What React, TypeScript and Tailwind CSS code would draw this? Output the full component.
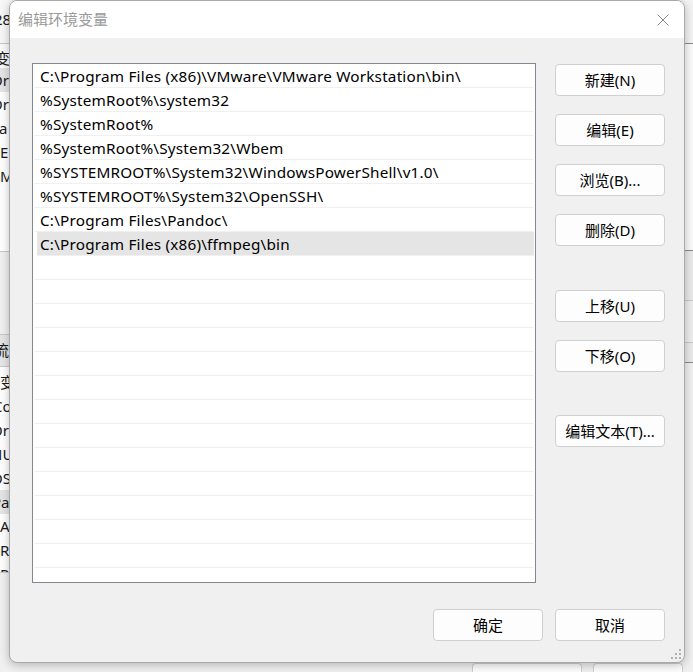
import * as React from "react"

const FONT = "font-['Noto_Sans','Noto_Sans_CJK_SC',sans-serif]"

const paths = [
  "C:\\Program Files (x86)\\VMware\\VMware Workstation\\bin\\",
  "%SystemRoot%\\system32",
  "%SystemRoot%",
  "%SystemRoot%\\System32\\Wbem",
  "%SYSTEMROOT%\\System32\\WindowsPowerShell\\v1.0\\",
  "%SYSTEMROOT%\\System32\\OpenSSH\\",
  "C:\\Program Files\\Pandoc\\",
  "C:\\Program Files (x86)\\ffmpeg\\bin",
]

const backRows = [
  { t: "变", shift: "ml-0" },
  { t: "Co", shift: "ml-[-7px]" },
  { t: "Or", shift: "ml-[-9px]" },
  { t: "NU", shift: "ml-[-9px]" },
  { t: "OS", shift: "ml-[-9px]" },
  { t: "Pa", shift: "ml-[-8px]" },
  { t: "A", shift: "ml-0" },
  { t: "R", shift: "ml-0" },
]

const Button = ({ label, className }: { label: string; className?: string }) => (
  <button
    className={`h-[32px] w-[110px] rounded-[4px] border border-[#d0d0d0] bg-[#fdfdfd] text-[15px] text-black ${className ?? ""}`}
  >
    {label}
  </button>
)

const BackStrip = () => (
  <div className="flex w-[12px] flex-col overflow-hidden whitespace-nowrap text-[15px] leading-[24px] text-[#1a1a1a]">
    <div className="h-[44px] bg-[#f7f7f7] pt-[7px] border-b border-[#c8c8c8]">
      <span className="ml-[-6px]">28</span>
    </div>
    <div className="h-[24px] bg-[#fafafa] pt-[2px]"><span className="ml-[-5px]">变量</span></div>
    <div className="h-[24px] bg-[#e5e5e5]"><span className="ml-[-9px]">Or</span></div>
    <div className="h-[24px] bg-white"><span className="ml-[-9px]">Or</span></div>
    <div className="h-[24px] bg-white"><span className="ml-[-1px]">a</span></div>
    <div className="h-[24px] bg-white"><span>E</span></div>
    <div className="h-[24px] bg-white"><span>M</span></div>
    <div className="h-[64px] bg-white border-b border-[#c8c8c8]" />
    <div className="h-[83px] bg-[#f0f0f0] border-b border-[#c8c8c8]" />
    <div className="h-[32px] bg-[#e6e6e6] pt-[3px] border-b border-[#c8c8c8]"><span className="ml-[-6px]">流</span></div>
    <div className="bg-white pt-[3px]">
      {backRows.map((r, i) => (
        <div key={i} className={`h-[24px] ${i === 5 ? "bg-[#e5e5e5]" : ""}`}>
          <span className={r.shift}>{r.t}</span>
        </div>
      ))}
      <div className="h-[10px] overflow-hidden leading-[24px]"><span>P</span></div>
    </div>
    <div className="flex-1 bg-[#f0f0f0] border-t border-[#c8c8c8]" />
  </div>
)

export default function App() {
  return (
    <div className={`relative h-[672px] w-[693px] overflow-hidden bg-[#f0f0f0] ${FONT}`}>
      {/* window behind the dialog */}
      <div className="flex h-full">
        <BackStrip />
        <div className="flex flex-1 flex-col justify-end">
          <div className="flex h-[9px] gap-[11px] pl-[460px]">
            <div className="w-[110px] rounded-t-[4px] border border-b-0 border-[#d0d0d0] bg-[#fdfdfd]" />
            <div className="flex-1 rounded-t-[4px] border border-b-0 border-[#d0d0d0] bg-[#fdfdfd]" />
          </div>
        </div>
        <div className="flex w-[10px] flex-col">
          <div className="h-[44px] bg-[#f3f3f3] border-b border-[#8a8a8a]" />
          <div className="h-[207px] bg-[#fafafa] border-b border-[#8a8a8a]" />
          <div className="h-[50px] bg-[#e9e9e9] border-b border-[#c8c8c8]" />
          <div className="h-[42px] bg-[#ededed] border-b border-[#c8c8c8]" />
          <div className="h-[20px] bg-[#e9e9e9] border-b border-[#8a8a8a]" />
          <div className="flex-1 bg-[#f0f0f0]" />
        </div>
      </div>

      {/* dialog */}
      <div className="absolute left-[9px] top-0 flex h-[663px] w-[676px] flex-col overflow-hidden rounded-[8px] border border-[#a9a9a9] bg-[#f0f0f0] shadow-[0_2px_10px_rgba(0,0,0,0.25)]">
        <div className="flex h-[37px] shrink-0 items-center justify-between bg-white pl-[8px] pr-[15px]">
          <span className="text-[15px] text-[#9a9a9a]">编辑环境变量</span>
          <svg width="12" height="12" viewBox="0 0 12 12" className="mt-[1px]">
            <path d="M0.5 0.5 L11.5 11.5 M11.5 0.5 L0.5 11.5" stroke="#8a8a8a" strokeWidth="1" fill="none" />
          </svg>
        </div>

        <div className="flex flex-1 flex-col pl-[22px] pr-[19px] pt-[25px]">
          <div className="flex">
            <div className="h-[520px] w-[504px] overflow-hidden border border-[#828790] bg-white">
              {Array.from({ length: 22 }).map((_, i) => (
                <div
                  key={i}
                  className={`h-[24px] border-b border-[#f0f0f0] pt-[1px] text-[15.3px] tracking-[0.2px] leading-[23px] text-black whitespace-nowrap ${
                    i === 7 ? "ml-[4px] mr-[1px] bg-[#e5e5e5] pl-[3px]" : "mx-[1px] pl-[6px]"
                  }`}
                >
                  {paths[i] ?? ""}
                </div>
              ))}
            </div>
            <div className="ml-[19px] flex flex-col pt-[1px]">
              <Button label="新建(N)" />
              <Button label="编辑(E)" className="mt-[18px]" />
              <Button label="浏览(B)..." className="mt-[18px]" />
              <Button label="删除(D)" className="mt-[18px]" />
              <Button label="上移(U)" className="mt-[44px]" />
              <Button label="下移(O)" className="mt-[18px]" />
              <Button label="编辑文本(T)..." className="mt-[43px]" />
            </div>
          </div>
          <div className="mt-[26px] flex justify-end gap-[12px]">
            <Button label="确定" />
            <Button label="取消" />
          </div>
        </div>

        {/* resize grip */}
        <svg width="12" height="12" viewBox="0 0 12 12" className="absolute bottom-[2px] right-[2px]">
          <rect x="9" y="1" width="2" height="2" fill="#b0b0b0" />
          <rect x="5" y="5" width="2" height="2" fill="#b0b0b0" />
          <rect x="9" y="5" width="2" height="2" fill="#b0b0b0" />
          <rect x="1" y="9" width="2" height="2" fill="#b0b0b0" />
          <rect x="5" y="9" width="2" height="2" fill="#b0b0b0" />
          <rect x="9" y="9" width="2" height="2" fill="#b0b0b0" />
        </svg>
      </div>
    </div>
  )
}
